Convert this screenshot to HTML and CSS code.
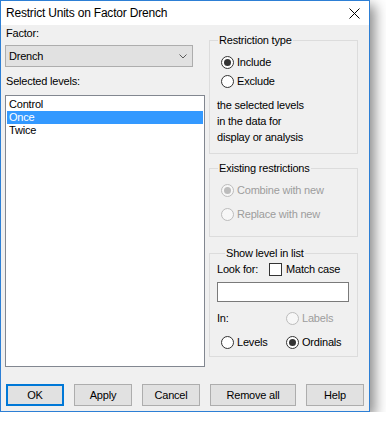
FILE: index.html
```html
<!DOCTYPE html>
<html>
<head>
<meta charset="utf-8">
<title>Restrict Units on Factor Drench</title>
<link rel="stylesheet" href="styles.css">
</head>
<body>
<div class="window">
  <div class="titlebar">
    <span class="title">Restrict Units on Factor Drench</span>
    <svg class="close" width="11" height="11" viewBox="0 0 11 11"><path d="M0.5 0.5 L10.5 10.5 M10.5 0.5 L0.5 10.5" stroke="#000" stroke-width="1" fill="none"/></svg>
  </div>
  <div class="client">
    <div class="main">
      <div class="left">
        <div class="lbl factor-lbl">Factor:</div>
        <div class="combo">
          <span>Drench</span>
          <svg width="8" height="5" viewBox="0 0 8 5"><path d="M0.5 0.5 L4 4 L7.5 0.5" stroke="#5a5a5a" stroke-width="1" fill="none"/></svg>
        </div>
        <div class="lbl levels-lbl">Selected levels:</div>
        <div class="listbox">
          <div class="item">Control</div>
          <div class="item sel">Once</div>
          <div class="item">Twice</div>
        </div>
      </div>
      <div class="right">
        <fieldset class="group g1">
          <legend>Restriction type</legend>
          <div class="opt"><span class="radio checked"></span>Include</div>
          <div class="opt second"><span class="radio"></span>Exclude</div>
          <p class="note">the selected levels<br>in the data for<br>display or analysis</p>
        </fieldset>
        <fieldset class="group g2">
          <legend>Existing restrictions</legend>
          <div class="opt disabled"><span class="radio checked"></span>Combine with new</div>
          <div class="opt disabled second"><span class="radio"></span>Replace with new</div>
        </fieldset>
        <fieldset class="group g3">
          <legend>Show level in list</legend>
          <div class="row look">
            <span class="look-lbl">Look for:</span>
            <span class="check"></span><span class="check-lbl">Match case</span>
          </div>
          <div class="textbox"></div>
          <div class="row in-row">
            <span class="cell1">In:</span>
            <span class="opt disabled"><span class="radio"></span>Labels</span>
          </div>
          <div class="row lv-row">
            <span class="cell1 opt"><span class="radio"></span>Levels</span>
            <span class="opt"><span class="radio checked"></span>Ordinals</span>
          </div>
        </fieldset>
      </div>
    </div>
    <div class="buttons">
      <button class="btn default">OK</button>
      <button class="btn">Apply</button>
      <button class="btn">Cancel</button>
      <button class="btn wide">Remove all</button>
      <button class="btn">Help</button>
    </div>
  </div>
</div>
</body>
</html>
```
FILE: styles.css
```css
* { box-sizing: border-box; }

body {
  margin: 0;
  background: #fff;
  font-family: "Liberation Sans", Arial, sans-serif;
  font-size: 11px;
  letter-spacing: -0.2px;
  color: #000;
}

.window {
  width: 370px;
  height: 412px;
  border: 1px solid #2d7fd5;
  background: #f0f0f0;
  box-shadow: 5px 5px 12px rgba(0, 0, 0, 0.45);
  display: flex;
  flex-direction: column;
}

.titlebar {
  height: 24px;
  background: #fff;
  display: flex;
  align-items: center;
  justify-content: space-between;
  padding: 0 9px 0 5px;
}

.title {
  font-size: 12px;
  line-height: 24px;
  letter-spacing: -0.2px;
}

.close { margin-top: 1px; }

.client {
  flex: 1;
  display: flex;
  flex-direction: column;
  padding: 0 0 5px 4px;
}

.main {
  display: flex;
  gap: 4px;
  height: 342px;
}

.left {
  width: 200px;
  display: flex;
  flex-direction: column;
}

.lbl { line-height: 13px; height: 13px; }

.factor-lbl { margin: 2px 0 5px 1px; }

.combo {
  width: 188px;
  height: 22px;
  border: 1px solid #adadad;
  background: #e1e1e1;
  display: flex;
  align-items: center;
  justify-content: space-between;
  padding: 0 5px 0 3px;
  line-height: 13px;
}

.levels-lbl { margin: 8px 0 7px 1px; }

.listbox {
  flex: 1;
  border: 1px solid #828790;
  background: #fff;
  padding: 2px 1px;
}

.item {
  height: 13px;
  line-height: 13px;
  padding-left: 2px;
}

.item.sel {
  background: #3399ff;
  color: #fff;
}

.right {
  width: 149px;
  display: flex;
  flex-direction: column;
  padding-top: 9px;
}

.group {
  margin: 0;
  padding: 0;
  min-width: 0;
  border: 1px solid #dcdcdc;
}

.group legend {
  margin-left: 8px;
  padding: 0 1px;
  line-height: 13px;
  height: 13px;
}

.g1 { padding: 9px 0 8px 0; }
.g2 { margin-top: 8px; padding: 9px 0 15px 0; }
.g3 { margin-top: 10px; padding: 3px 0 7px 7px; }

.opt {
  display: flex;
  align-items: center;
  gap: 3px;
  height: 13px;
  line-height: 13px;
}

.g1 .opt, .g2 .opt { margin-left: 11px; }

.g1 .second { margin-top: 6px; }
.g2 .second { margin-top: 11px; }

.radio {
  width: 13px;
  height: 13px;
  flex: none;
  border: 1px solid #333;
  border-radius: 50%;
  background: #fff;
  display: inline-flex;
  align-items: center;
  justify-content: center;
}

.radio.checked::after {
  content: "";
  width: 7px;
  height: 7px;
  border-radius: 50%;
  background: #333;
}

.disabled { color: #9d9d9d; }

.disabled .radio {
  border-color: #bcbcbc;
  background: #f7f7f7;
}

.disabled .radio.checked::after { background: #bcbcbc; }

.note {
  margin: 9px 0 0 7px;
  line-height: 16px;
}

.row {
  display: flex;
  align-items: center;
  height: 13px;
  line-height: 13px;
}

.look-lbl { width: 52px; }

.check {
  width: 13px;
  height: 13px;
  border: 1px solid #333;
  background: #fff;
  margin-right: 4px;
}

.textbox {
  width: 132px;
  height: 20px;
  margin-top: 6px;
  border: 1px solid #7a7a7a;
  background: #fff;
}

.in-row { margin-top: 10px; }
.lv-row { margin-top: 11px; }

.cell1 { width: 69px; flex: none; }
.lv-row .cell1 { padding-left: 4px; }

.buttons {
  display: flex;
  gap: 10px;
  margin-top: 17px;
  margin-left: 1px;
}

.btn {
  width: 58px;
  height: 22px;
  padding: 0;
  border: 1px solid #adadad;
  background: #e1e1e1;
  font-family: inherit;
  font-size: 11px;
  letter-spacing: -0.2px;
  color: #000;
}

.btn.default { border: 2px solid #0078d7; }
.btn.wide { width: 86px; }
```
